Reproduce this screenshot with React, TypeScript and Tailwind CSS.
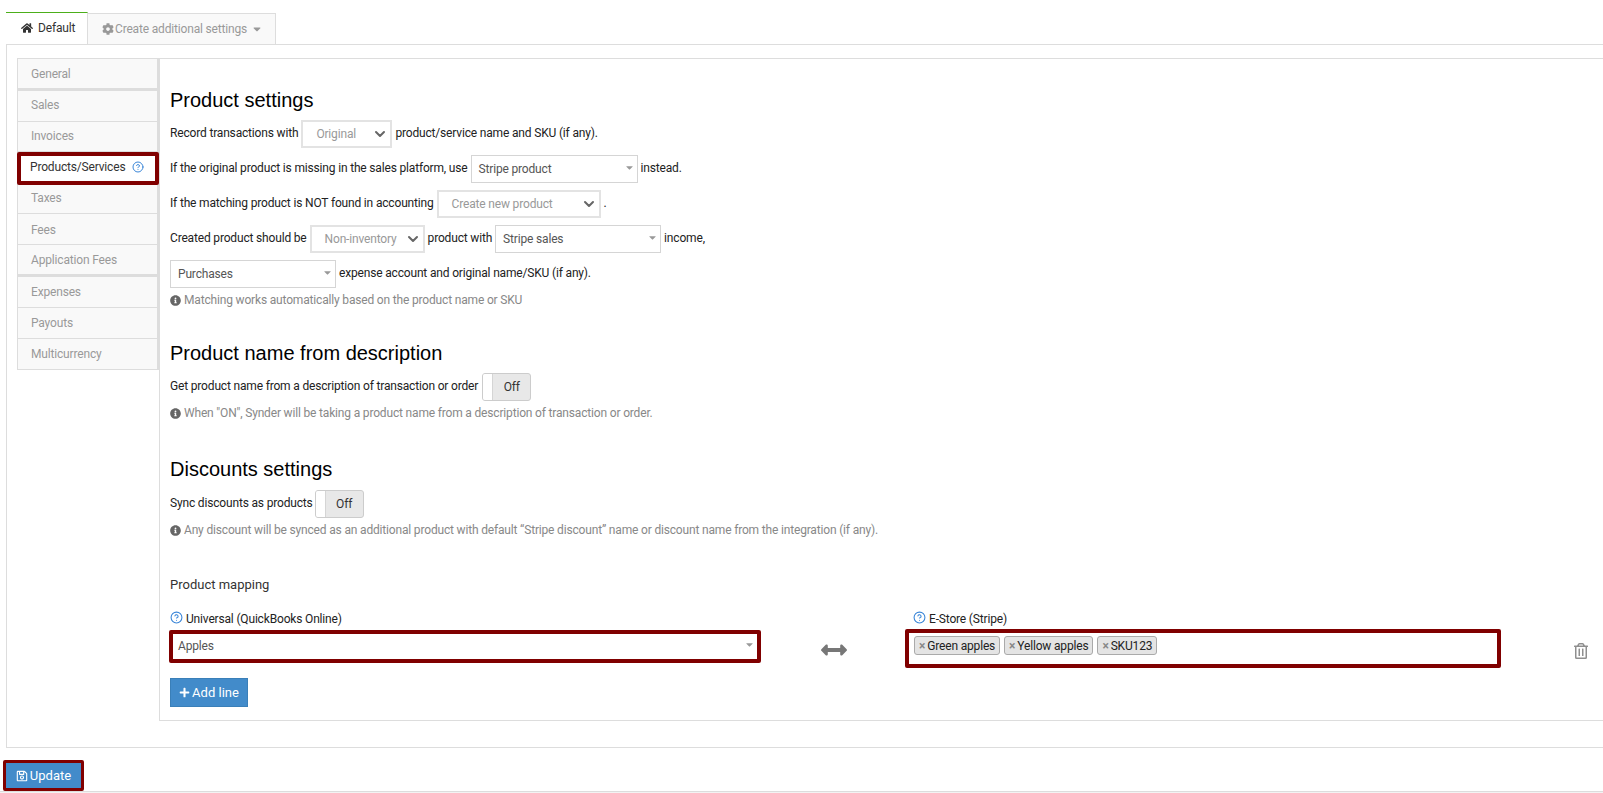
import { ChevronDown, CircleHelp } from "lucide-react"
import { FaHome, FaCog, FaCaretDown, FaInfoCircle, FaRegSave, FaPlus, FaArrowsAltH, FaRegTrashAlt } from "react-icons/fa"

const sideItems = [
    { label: "General", cls: "h-[32px] border-b-[3px]" },
    { label: "Sales", cls: "h-[31px] pb-[2px]" },
    { label: "Invoices", cls: "h-[30px] pb-[2px]" },
]
const sideItemsAfter = [
    { label: "Taxes", cls: "h-[29px] pb-[2px]" },
    { label: "Fees", cls: "h-[31px] pt-[1px]" },
    { label: "Application Fees", cls: "h-[32px] border-b-[3px]" },
    { label: "Expenses", cls: "h-[31px]" },
    { label: "Payouts", cls: "h-[31px]" },
    { label: "Multicurrency", cls: "h-[31px]" },
]

function SideItem({ label, cls }: { label: string; cls: string }) {
    return (
        <div className={`flex items-center pl-[13px] bg-[#f9f9f9] border-b border-[#dddddd] text-[#999999] ${cls}`}>
            {label}
        </div>
    )
}

// native looking select, grey chevron
function PlainSelect({ label, width }: { label: string; width: string }) {
    return (
        <div className={`h-[28px] flex items-center justify-between shrink-0 border-2 border-[#e3e3e3] pl-[13px] pr-[2px] text-[#999999] bg-white ${width}`}>
            <span>{label}</span>
            <ChevronDown size={16} strokeWidth={3} className="text-[#666666]" />
        </div>
    )
}

// select2 style control with a small caret
function Select2({ label, width }: { label: string; width: string }) {
    return (
        <div className={`h-[28px] flex items-center justify-between shrink-0 border border-[#d5d5d5] pl-[7px] pr-[2px] text-[#555555] bg-white ${width}`}>
            <span>{label}</span>
            <FaCaretDown size={11} className="text-[#999999] mb-[3px]" />
        </div>
    )
}

// row text sits a touch above the control text
function Txt({ children, className = "" }: { children: React.ReactNode; className?: string }) {
    return <span className={`pb-[2px] ${className}`}>{children}</span>
}

function Toggle() {
    return (
        <div className="h-[28px] w-[49px] flex shrink-0 rounded-[3px] border border-[#cccccc] bg-[#e8e8e8] overflow-hidden">
            <div className="w-[10px] bg-white border-r border-[#d5d5d5]" />
            <div className="flex-1 flex items-center justify-center text-[#333333]">Off</div>
        </div>
    )
}

function Hint({ children, className }: { children: React.ReactNode; className: string }) {
    return (
        <div className={`h-[16px] flex items-center gap-[3px] text-[#888888] ${className}`}>
            <FaInfoCircle size={11} className="text-[#666666]" />
            <span>{children}</span>
        </div>
    )
}

function Heading({ children, className }: { children: React.ReactNode; className: string }) {
    return (
        <h2 className={`h-[28px] flex items-center text-[20px] text-black tracking-normal font-['Liberation_Sans',sans-serif] ${className}`}>
            {children}
        </h2>
    )
}

function Tag({ label }: { label: string }) {
    return (
        <div className="h-[19px] flex items-center gap-[2px] px-[4px] rounded-[3px] border border-[#aaaaaa] bg-[#e4e4e4] text-[#222222]">
            <span className="text-[#888888] font-bold leading-none">×</span>
            <span>{label}</span>
        </div>
    )
}

export default function App() {
    return (
        <div className="w-full h-[793px] overflow-hidden bg-white pt-[12px] text-[12px] tracking-[-0.17px] text-[#222222] font-['Roboto',sans-serif]">
            {/* Tabs */}
            <div className="flex h-[32px] ml-[6px] items-end">
                <div className="w-[82px] h-[32px] flex items-center pl-[15px] pb-[2px] gap-[5px] border-t border-t-[#4caf1a] border-r border-[#dddddd] bg-white text-[#333333]">
                    <FaHome size={12} />
                    <span>Default</span>
                </div>
                <div className="w-[188px] h-[31px] flex items-center pl-[14px] pb-[1px] gap-[1px] border-t border-r border-[#dddddd] bg-[#f9f9f9] text-[#999999]">
                    <FaCog size={12} />
                    <span>Create additional settings</span>
                    <FaCaretDown size={12} className="ml-[3px]" />
                </div>
            </div>

            {/* Tab panel */}
            <div className="h-[704px] ml-[6px] -mr-[4px] border border-[#dddddd] pt-[13px] pl-[10px] flex items-start">
                <div className="w-[142px] shrink-0 border-t border-l border-[#dddddd] border-r-2">
                    {sideItems.map(item => <SideItem key={item.label} {...item} />)}
                    <div className="relative h-[33px] -ml-px -mr-[2px] flex items-center gap-[7px] pl-[9px] pb-[4px] border-[4px] border-[#800000] rounded-[2px] bg-white text-[#333333] z-10">
                        <span>Products/Services</span>
                        <CircleHelp size={12} className="text-[#3a86d8]" />
                    </div>
                    {sideItemsAfter.map(item => <SideItem key={item.label} {...item} />)}
                </div>

                <div className="h-[663px] flex-1 border-t border-b border-l border-[#dddddd] pl-[10px] pt-[27px]">
                    <Heading className="mb-[6px]">Product settings</Heading>

                    <div className="flex items-center h-[28px] mb-[7px]">
                        <Txt className="mr-[3px]">Record transactions with</Txt>
                        <PlainSelect label="Original" width="w-[91px]" />
                        <Txt className="ml-[3px]">product/service name and SKU (if any).</Txt>
                    </div>
                    <div className="flex items-center h-[28px] mb-[7px]">
                        <Txt className="mr-[3px]">If the original product is missing in the sales platform, use</Txt>
                        <Select2 label="Stripe product" width="w-[167px]" />
                        <Txt className="ml-[3px]">instead.</Txt>
                    </div>
                    <div className="flex items-center h-[28px] mb-[7px]">
                        <Txt className="mr-[3px]">If the matching product is NOT found in accounting</Txt>
                        <PlainSelect label="Create new product" width="w-[164px]" />
                        <Txt className="ml-[3px]">.</Txt>
                    </div>
                    <div className="flex items-center h-[28px] mb-[7px]">
                        <Txt className="mr-[3px]">Created product should be</Txt>
                        <PlainSelect label="Non-inventory" width="w-[115px]" />
                        <Txt className="mx-[3px]">product with</Txt>
                        <Select2 label="Stripe sales" width="w-[166px]" />
                        <Txt className="ml-[3px]">income,</Txt>
                    </div>
                    <div className="flex items-center h-[28px]">
                        <Select2 label="Purchases" width="w-[166px]" />
                        <Txt className="ml-[3px]">expense account and original name/SKU (if any).</Txt>
                    </div>
                    <Hint className="mt-[4px]">Matching works automatically based on the product name or SKU</Hint>

                    <Heading className="mt-[31px] mb-[6px]">Product name from description</Heading>
                    <div className="flex items-center h-[28px] gap-[4px]">
                        <Txt>Get product name from a description of transaction or order</Txt>
                        <Toggle />
                    </div>
                    <Hint className="mt-[4px]">When "ON", Synder will be taking a product name from a description of transaction or order.</Hint>

                    <Heading className="mt-[34px] mb-[7px]">Discounts settings</Heading>
                    <div className="flex items-center h-[28px] gap-[2px]">
                        <Txt>Sync discounts as products</Txt>
                        <Toggle />
                    </div>
                    <Hint className="mt-[4px]">Any discount will be synced as an additional product with default “Stripe discount” name or discount name from the integration (if any).</Hint>

                    <div className="h-[16px] mt-[39px] flex items-center text-[13px] tracking-normal text-[#333333]">Product mapping</div>

                    <div className="flex items-start mt-[18px] -ml-px">
                        <div className="w-[592px] shrink-0">
                            <div className="h-[19px] flex items-start gap-[3px] pl-px">
                                <CircleHelp size={13} className="text-[#3a86d8]" />
                                <span className="leading-[16px]">Universal (QuickBooks Online)</span>
                            </div>
                            <div className="h-[33px] flex items-center justify-between border-[4px] border-[#800000] rounded-[2px] pl-[5px] pr-[2px] pb-px text-[#555555]">
                                <span>Apples</span>
                                <FaCaretDown size={11} className="text-[#999999] mb-[3px]" />
                            </div>
                        </div>
                        <div className="w-[146px] shrink-0 pt-[26px] flex justify-center">
                            <FaArrowsAltH size={26} className="text-[#777777]" />
                        </div>
                        <div className="w-[596px] shrink-0 -ml-[2px]">
                            <div className="h-[18px] flex items-start gap-[3px] pl-[8px]">
                                <CircleHelp size={13} className="text-[#3a86d8]" />
                                <span className="leading-[16px]">E-Store (Stripe)</span>
                            </div>
                            <div className="h-[39px] flex items-start gap-[4px] border-[4px] border-[#800000] rounded-[2px] pl-[5px] pt-[3px]">
                                <Tag label="Green apples" />
                                <Tag label="Yellow apples" />
                                <Tag label="SKU123" />
                            </div>
                        </div>
                        <div className="ml-[72px] pt-[32px]">
                            <FaRegTrashAlt size={16} className="text-[#8f8f8f]" />
                        </div>
                    </div>

                    <div className="mt-[10px] w-[78px] h-[29px] flex items-center justify-center gap-[2px] bg-[#428bca] border border-[#3a7fb8] text-white text-[13px] tracking-normal">
                        <FaPlus size={11} />
                        <span>Add line</span>
                    </div>
                </div>
            </div>

            {/* Update */}
            <div className="mt-[12px] ml-[3px] w-[81px] h-[31px] border-[3px] border-[#800000] rounded-[2px] flex items-center justify-center gap-[2px] bg-[#428bca] text-white text-[13px] tracking-normal">
                <FaRegSave size={12} />
                <span>Update</span>
            </div>
            <div className="h-[2px] border-t border-[#dddddd] bg-[#f3f3f3]" />
        </div>
    )
}
